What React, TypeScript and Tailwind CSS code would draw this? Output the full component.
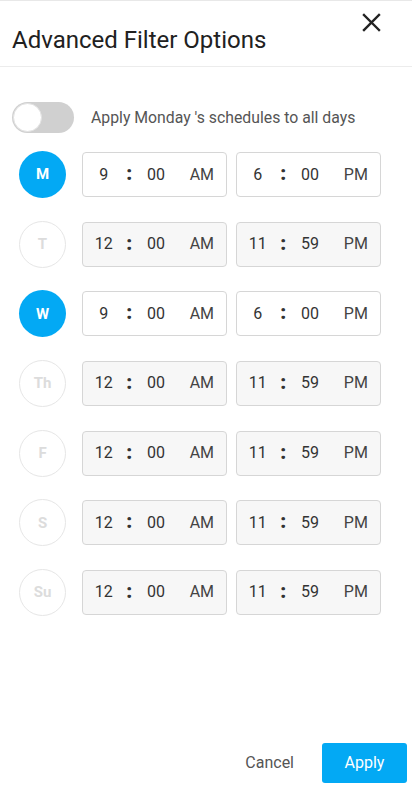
import React from "react";

type Row = { day: string; active: boolean; sh: string; sm: string; eh: string; em: string };

const rows: Row[] = [
  { day: "M", active: true, sh: "9", sm: "00", eh: "6", em: "00" },
  { day: "T", active: false, sh: "12", sm: "00", eh: "11", em: "59" },
  { day: "W", active: true, sh: "9", sm: "00", eh: "6", em: "00" },
  { day: "Th", active: false, sh: "12", sm: "00", eh: "11", em: "59" },
  { day: "F", active: false, sh: "12", sm: "00", eh: "11", em: "59" },
  { day: "S", active: false, sh: "12", sm: "00", eh: "11", em: "59" },
  { day: "Su", active: false, sh: "12", sm: "00", eh: "11", em: "59" },
];

function TimeBox({ h, m, p, active }: { h: string; m: string; p: string; active: boolean }) {
  return (
    <div
      className={`w-[145px] h-[45px] rounded-[4px] border border-[#d6d6d6] flex items-center text-[16px] text-[#333] ${
        active ? "bg-white" : "bg-[#f7f7f7]"
      }`}
    >
      <span className="w-[42px] text-center">{h}</span>
      <span className="w-[10px] text-center font-black text-[20px] leading-none -mt-[3px]">:</span>
      <span className="w-[44px] text-center">{m}</span>
      <span className="w-[49px] text-center text-[#444]">{p}</span>
    </div>
  );
}

export default function App() {
  return (
    <div
      className="w-[412px] h-[798px] bg-white border-t border-[#e8e8e8] flex flex-col"
      style={{ fontFamily: "Roboto, 'Noto Sans', sans-serif" }}
    >
      <div className="flex justify-between items-start h-[66px] border-b border-[#ececec]">
        <h1 className="ml-[12px] mt-[24px] text-[24px] leading-[30px] text-[#212121] font-normal">
          Advanced Filter Options
        </h1>
        <button className="mt-[11px] mr-[31px] w-[20px] h-[20px] flex items-center justify-center text-[#222]">
          <svg width="19" height="19" viewBox="0 0 19 19" fill="none" stroke="currentColor" strokeWidth="2.4" strokeLinecap="square">
            <path d="M2 2L17 17M17 2L2 17" />
          </svg>
        </button>
      </div>

      <div className="flex items-center mt-[35px] ml-[12px]">
        <div className="w-[62px] h-[31px] rounded-full bg-[#d0d0d0] flex items-center p-[1px]">
          <div className="w-[29px] h-[29px] rounded-full bg-white border border-[#e2e2e2]" />
        </div>
        <span className="ml-[17px] text-[15.8px] text-[#555]">Apply Monday 's schedules to all days</span>
      </div>

      <div className="flex flex-col gap-[24.67px] mt-[19px] pl-[19px]">
        {rows.map((r) => (
          <div key={r.day} className="flex items-center h-[45px]">
            <div
              className={`w-[47px] h-[47px] rounded-full flex items-center justify-center text-[15px] font-bold ${
                r.active ? "bg-[#03a9f4] text-white" : "border border-[#e6e6e6] text-[#dcdcdc]"
              }`}
            >
              {r.day}
            </div>
            <div className="ml-[16px] flex gap-[9px]">
              <TimeBox h={r.sh} m={r.sm} p="AM" active={r.active} />
              <TimeBox h={r.eh} m={r.em} p="PM" active={r.active} />
            </div>
          </div>
        ))}
      </div>

      <div className="flex-1" />

      <div className="flex justify-end items-center pr-[5px] pb-[15px]">
        <button className="text-[16px] text-[#555] mr-[28px]">Cancel</button>
        <button className="w-[85px] h-[40px] rounded-[3px] bg-[#03a9f4] text-white text-[16px]">Apply</button>
      </div>
    </div>
  );
}
